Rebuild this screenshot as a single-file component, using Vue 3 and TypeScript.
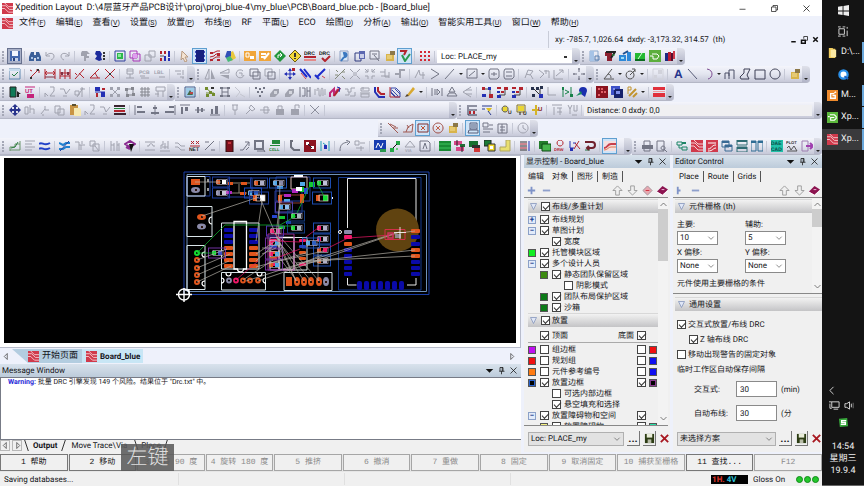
<script setup lang="ts">
import { h, ref } from 'vue'

type Shape = { kind: string; color: string; d: string; x?: number; y?: number; size?: number; text?: string }

const G = '#a0a2ae'
const D = '#727584'
const R = '#b3242e'
const B = '#2430b4'

// Each glyph is drawn on a 12 x 12 grid. s = stroke, S = heavy stroke, f = fill, t = lettering (x y size text).
const glyphSource: Record<string, string> = {
  save: 'f#4468ad M1 1h10v10H1z|f#f2f6ff M3 1h6v5H3z|f#c3d0e8 M3 8h6v3H3z|f#26407c M4 8h2v3H4z',
  find: 'f#3c6099 M2 2h3v3h2V2h3l2 5v4H7V8H5v3H0V7z|f#a8c4e8 M2 7h2v2H2z M8 7h2v2H8z',
  undo: `s${G} M2 2v4h4 M2 6c3-4 8-3 8 0c0 2-1 3-3 4`,
  redo: `s${G} M10 2v4H6 M10 6C7 2 2 3 2 6c0 2 1 3 3 4`,
  treeG: `f${G} M3 1h5l3 3H8v2h2v2H7v3H5V6H2V3z`,
  treeB: `f#1d2b9c M2 1h4l2 3-1 3 1 3-3 1-4-2 2-3-2-2z|f#333 M9 2h2v2H9z M9 5h2v2H9z M9 8h2v2H9z`,
  sqGreen: 's#30409c M1 1h10v10H1z|f#2cb84c M3 3h6v6H3z|f#8ce89c M4 4h3v3H4z',
  copyP: 's#a934b8 M1 1h7v7H1z M4 4h7v7H4z|f#e19cf0 M4 4h4v4H4z',
  copyG: `s${G} M1 5h6v6H1z M5 1h6v6H5z`,
  gridRB: `f${R} M1 1h2v3H1z M5 1h2v3H5z M1 8h2v3H1z|f${B} M9 1h2v6H9z M5 6h2v5H5z M9 8h2v3H9z|s#555 M1 6h4`,
  cursor: 'f#f4e3d2 M3 1l6 6H6l2 4-2 1-2-4-2 2z|s#b89a80 M3 1l6 6H6l2 4-2 1-2-4-2 2z',
  chip: 'f#16207e M2 0h8v12H2z|f#4452c4 M1 1h1v2H1z M1 5h1v2H1z M1 9h1v2H1z M10 1h1v2h-1z M10 5h1v2h-1z M10 9h1v2h-1z',
  netRed: `s${R} M1 3h3l4-2h3 M1 7l4-1 2-2h4 M1 11l6-4h4|f${R} M1 2h3v2H1z M8 3h3v3H8z M1 9h3v2H1z M8 9h3v2H8z`,
  layersY: 'f#e8c83c M5 3l4-2 3 7-5 3z|f#3250b8 M3 1h4v5l-3 3-3-2z|f#48b878 M2 8l4-2 3 4-5 2z',
  box1: 'f#f0a53a M0 1h12v10H0z|s#fff M2 3h3v4H2z|f#fff M6 6h4v3H6z',
  box2: 'f#f0a53a M0 1h12v10H0z|S#fff M2 4h5 M2 7h5 M5 9l5-6',
  diaG: 'f#22963c M6 0l6 6-6 6-6-6z|s#fff M4 8V5h3 M6 3l2 2-2 2',
  diaY: 'f#f2d838 M6 0l6 6-6 6-6-6z|s#6b5c10 M6 0l6 6-6 6-6-6z|f#333 M5 3h2v4H5z M5 8h2v1H5z',
  drc: `t#111 0 5 5 DRC|f${R} M0 6h12v2H0z|f#e38a8a M0 9h12v2H0z`,
  drcV: `t#111 0 5 5 DRC|S${R} M3 8l3 3 5-5`,
  mag: 's#8fa2c4 M1 1h8v10H1z|f#d6e8f8 M2 2h6v8H2z|S#3a78c0 M5 3a2 2 0 1 1 1 4z M5 7l-3 4',
  paste: 's#303c80 M1 3h6v8H1z|f#5c68b0 M5 1h6v8H5z|f#c9cee8 M6 4h4v4H6z',
  winG: `s${D} M1 1h9v8H1z|s${D} M5 5l5 6 M3 4h5`,
  hand: 'f#d8b44c M2 4h8v7H2z|f#8c7848 M6 1h5v4H6z|s#f4e09c M3 6h5 M3 8h5',
  check: `S${R} M1 1h6l-2 4|S#2b9850 M3 5l3 6 5-7`,
  dots9: 'f#d42832 M1 1h2v2H1z M5 1h2v2H5z M9 1h2v2H9z M1 5h2v2H1z M5 5h2v2H5z M9 5h2v2H9z M1 9h2v2H1z M5 9h2v2H5z M9 9h2v2H9z',
  docBlue: 's#8ba8cc M1 1h8v10H1z|f#a6c3e6 M1 1h4v10H1z|s#5a80b0 M6 6h4v4H6z',
  redPen: 'f#8c2030 M1 2h7v4H1z M3 6h5v5H3z|S#222 M2 2h9l-4 6|s#30a040 M8 5h3',
  cardBlue: 'f#2d88d8 M0 5h7v6H0z M8 2h4v9H8z|f#9adcf8 M2 7h3v2H2z|S#205090 M4 4l5-3',
  cardGreen: 'f#24b832 M1 3h10v7H1z|f#0c6c20 M1 9h10v2H1z|s#d8ffd8 M4 9l4-6',
  dGreen: 'f#5cae3c M0 0h12v12H0z|s#fff M3 4h5l2 2-2 3H4V6H1',
  books: 'f#1c2880 M1 3h3v8H1z|f#b81c30 M4 2h3v9H4z|f#541030 M7 3h2v8H7z|f#d03848 M9 1h2v8H9z',
  formOk: 's#5f88b0 M0 1h11v10H0z|f#c6dced M0 1h11v2H0z|s#268048 M3 6l2 2 4-4',
  angle1: `s${R} M1 10l7-7 M1 2l2 1 M7 2h3v3|f#333 M1 9h2v2H1z M8 1h2v2H8z`,
  dimH: `s${R} M1 1v10 M11 1v10 M1 5h10 M3 3L1 5l2 2 M9 3l2 2-2 2|s#803040 M1 9h10`,
  dimHH: `s${R} M1 1v10 M6 1v10 M11 1v10 M1 5h10 M1 8h10|f#803040 M2 4h2v3H2z M8 4h2v3H8z`,
  dimSlash: `s${R} M1 11l9-10 M5 5l5 5 M3 7l-2-2`,
  dimAng: `s${R} M10 1L1 10h10 M6 5l3 5`,
  dimX: `s${R} M1 11L11 1 M1 1l9 9|f#333 M5 5h2v2H5z`,
  stamp: `s${G} M3 1h6v5H3z M6 6v4 M2 10h8 M3 3h6`,
  labelG: `s${G} M1 8h5 M2 10h8|t${G} 0 6 5 PCB`,
  labelL: `s${G} M5 9h6|t${G} 0 6 5 LBL`,
  linesG: `s${G} M1 3h6 M3 6h4 M6 9h4 M9 2v5 M9 9v2`,
  mirH: `s${G} M5 1v10H1z|f${G} M7 1l4 10H7z`,
  mirV: `s${G} M10 1v4H1z|f${G} M1 7h9v4z`,
  rot: `s${G} M9 3a4 4 0 1 0 1 4 M5 5h3v3`,
  sq2: `s${D} M1 1h8v7H1z M4 4h7v7H4z`,
  sq2b: `s${G} M1 1h7v7H1z|s${D} M4 4h7v7H4z`,
  moveRB: `s${B} M6 1v10 M1 6h10|f${R} M8 0h3v3H8z|f${B} M4 3l2-3 2 3z M4 9l2 3 2-3z M3 4L0 6l3 2z M9 4l3 2-3 2z`,
  bluePar: 'S#1c2ccc M1 1l7 8 M5 1l7 9|s#d04050 M2 5l5 6',
  blueK: 'S#1c2ccc M1 7l4 4 M11 1L3 9|s#d04050 M8 8l3 2',
  crossG: 's#858b7a M1 11L11 1 M2 2l2 2 M8 8l3 3 M1 7h3 M8 4h3',
  starG: `s${G} M1 1l3 3 M11 1L8 4 M1 11l3-3 M11 11L8 8 M4 5h4 M4 7h4`,
  starG2: `s${G} M1 4h3V1 M8 1v3h3 M1 8h3v3 M8 11V8h3 M1 1l3 3 M11 1L8 4`,
  plusStep: `s${G} M1 4h5 M6 1v8h4 M2 8h8 M10 4v6`,
  tG: `S${G} M1 6h5V2h5 M6 6v4`,
  tri: `s${G} M1 10l4-8 1 5h5 M9 4v7`,
  arrowG: `s${D} M2 1l8 5-8 5`,
  slash: `s${D} M1 11L10 1`,
  boxSlash: `s${D} M1 1h10v9H1z M3 8l6-5`,
  roundP: `s${D} M2 1h8l1 2v6l-2 2H2l-1-2V3z M3 6h6 M6 4v4`,
  roundM: `s${D} M2 1h8l1 2v6l-2 2H2l-1-2V3z M3 4h6 M3 8h6`,
  loopG: `s${G} M2 10l3-8 5 1-3 4-4-1 M7 6l3 5`,
  loopG2: `s${G} M1 2l5 4-4 4 M6 3h5v7 M8 2v4`,
  boxArr: `s${G} M1 2v9h9 M3 8l7-6 M6 2h4v3`,
  compass: `s${D} M6 0v4 M6 8v4 M0 6h4 M8 6h4 M5 1h2 M5 11h2 M1 5v2 M11 5v2`,
  protractor: 's#555 M9 1L1 11h10 M5 6c2 0 3 2 3 4',
  circArr: 's#555 M5 3a4 4 0 1 0 .1 0 M5 7l5-5 M7 1h3v3',
  ghost: 's#d1d2db M1 1h10v10H1z|f#d1d2db M6 2h4v4H6z M2 7h3v3H2z',
  bigA: 't#26348c 2 10 12 A',
  backslash: 's#565b76 M1 1l9 10',
  arcP: 's#7a4a90 M5 1c7 1 6 9 1 10',
  poly: 's#4b4e66 M1 11V5h4v6 M5 8V2h5v9',
  polyl: 's#3c3f54 M2 11h8L8 7l3-6H5v4L1 9z',
  rect: 's#3c3f54 M1 2h10v9H1z',
  circ: 's#3c3f54 M6 1a5 5 0 1 0 .1 0',
  chipGreen: 'f#0f7a58 M1 1h6v10H1z|s#222 M1 1h6v10H1z|f#222 M8 5l4 3-2 0v3H8z',
  ut: 'f#c4247a M3 8h7v4H3z|t#c4247a 1 7 6 UT|s#c4247a M1 1h10 M4 8v3',
  shape1: `s${G} M1 11V7l3 3 M6 1h4v4L6 10h5`,
  shape2: `s${G} M1 3h4l2 5 4-5 M4 10h4`,
  shape3: `s${G} M1 5h4v4H1z M6 3h5 M8 1v10 M3 11l6-9`,
  blkRB: `f${B} M1 1h5v4H1z M7 6h4v5H7z|f${R} M8 2h3v2H8z M2 7h2v4H2z|s${B} M1 6h10`,
  netG: `s${G} M2 2l8 8 M10 2L2 10|f${G} M1 1h3v3H1z M8 1h3v3H8z M1 8h3v3H1z M8 8h3v3H8z`,
  netG2: 's#85878f M3 3h6v6H3z|f#85878f M1 2h3v3H1z M7 1h3v3H7z M2 8h3v3H2z M8 7h3v3H8z',
  hash: 's#85878f M1 3h10 M1 6h10 M1 9h10 M3 1v10 M9 1v10 M6 1v10',
  flagG: `s${G} M2 1h9v4H2z M4 5v6 M9 5v6 M1 8h4`,
  photo: 's#3c5c8c M1 1h10v10H1z|f#9ccbe8 M2 2h8v8H2z|f#486848 M3 9l3-5 3 5z|f#b84848 M6 6h3v2H6z',
  greenNet: 's#6f8a30 M2 2l8 7 M2 7h8|f#728c2c M1 1h3v3H1z M5 5h3v3H5z M2 8h3v3H2z M8 7h3v3H8z|f#333 M7 1h3v2H7z',
  brack: `s${D} M3 2h6v8H3z M3 6h6|f${D} M1 1h3v2H1z M8 1h3v2H8z M1 9h3v2H1z M8 9h3v2H8z`,
  fadeN: 's#c4c6d0 M1 1l5 5-4 5 M6 8l5 3',
  dotsD: `f${D} M1 1h2v2H1z M5 2h2v2H5z M9 1h2v2H9z M3 5h2v2H3z M7 5h2v2H7z M5 9h2v2H5z`,
  waveG: `f${G} M1 8l4-5h5v4L6 11H1z|f#d4d6de M5 5h3v3H5z`,
  hh: `s${D} M1 1v10 M3 2h3v8H3 M8 1v10 M8 5h3 M11 1v10`,
  mm: `s${G} M1 3v6 M3 5c0-4 2-4 2 0v3c0 3 2 3 2 0V5c0-4 2-4 2 0v5 M11 3v6`,
  diagRP: `S#c02878 M1 11V7l4-4v5l4-5|S${R} M5 10l6-8|s${B} M8 1l3 1-1 4`,
  meander: `s${G} M1 3h3v3h3V2h4 M1 9h4V6 M6 10h5V6`,
  crates: `s${G} M2 2h8v3H2z M1 7h10 M2 8h8v3H2z M4 1v3`,
  curveBR: `S${B} M1 1v5l4 5h6|S${R} M4 1v4l3 3h4`,
  hatchBlue: `s#3a4aaa M2 2h5l4 4v5H6L2 7z M3 4l6 6 M2 6l4 4 M6 3l5 5|s${R} M1 1v10h10`,
  pencil: 'f#d8a830 M3 9L9 1l2 2-6 7z|f#50402c M1 11l2-3 2 2z',
  playG: `s${D} M1 2v8 M4 3v6 M6 3l3 3-3 3z M11 2v8`,
  coneG: `s${D} M6 1l3 5H3z M1 10h10L9 7H3z`,
  spread: `s${G} M10 1L2 6l8 5 M11 4H5 M11 8H5`,
  nodeRB: `s#444 M3 3h6v6|f${R} M1 1h3v3H1z M8 8h4v4H8z|f${B} M7 1h3v3H7z M1 8h4v3H1z`,
  nodeRB2: `s#444 M3 9h6V3|f${R} M1 1h4v2H1z M8 1h4v3H8z M5 5h3v2H5z|f${B} M1 5h3v2H1z M1 9h4v3H1z`,
  pins: `s#333 M3 3l6 6 M9 3v6|f#26304c M0 1h3v3H0z M5 1h3v3H5z M9 0h3v3H9z M1 8h3v3H1z|f${B} M8 8h4v4H8z`,
  elbow: `s${G} M2 1v8h8`,
  elbowD: 'S#6c6f7c M2 1v6l3 3h6|f#6c6f7c M1 0h3v2H1z',
  greenH: 's#178048 M2 1v10 M10 1v10 M4 4l4 2-4 2|f#178048 M1 1h2v3H1z M9 8h3v3H9z',
  blueBall: 'f#1b2fae M3 5a4 4 0 0 1 8 0l-2 6-4-3z|f#1d8c60 M0 10l5-5 1 3z',
  redGrid: 'f#8b1320 M0 0h12v12H0z|f#e06068 M2 2h2v2H2z M5 2h2v2H5z M8 5h2v2H8z M2 8h2v2H2z M5 5h2v2H5z',
  blueStack: 'f#3c50c8 M0 0h9v9H0z|f#16226c M3 3h9v9H3z|f#7f90ec M2 2h2v2H2z M5 5h4v3H5z',
  pencilY: 's#c29430 M2 1v7 M2 1h3v3H2|S#c29430 M3 10l7-7 M7 11l4-4',
  redBars: 'f#e0303c M0 1h13v3H0z M0 7h13v4H0z|f#f09ca0 M0 5h13v1H0z',
  moveB: 'S#29348c M6 1v10 M1 6h10|f#29348c M3 3l3-3 3 3z M3 9l3 3 3-3z M3 3L0 6l3 3z M9 3l3 3-3 3z',
  upd: `s${G} M1 3v7h3V3z M6 1v8 M6 5h4v5`,
  wrench: `s${G} M2 10l4-5 M6 2v4h4 M3 11h2`,
  sheets: `s${G} M1 2h5v7H1z M4 5h6v6H4z`,
  clip: 'f#c89444 M1 1h8v10H1z|f#f6e9b0 M5 4h6l1 2v6H5z|f#5a5030 M3 0h4v2H3z',
  stackR: `f#3a2430 M0 1h11v2H0z|f#26803c M0 4h11v1H0z|f${R} M0 6h11v2H0z|f#3a2430 M0 9h12v2H0z`,
  alL: `s${D} M1 1v10|f${D} M3 2h5v2H3z M3 7h8v2H3z`,
  alC: `s${D} M6 1v10|f${D} M4 3h4v2H4z M2 8h8v2H2z`,
  alR: `s${D} M11 1v10|f${D} M5 2h5v2H5z M1 7h9v2H1z`,
  alT: `s${D} M1 1h10|f${D} M2 3h2v7H2z M6 3h3v4H6z`,
  alM: `s${D} M1 6h10|f${D} M3 3h2v6H3z M7 4h2v4H7z`,
  alB: `s${D} M1 11h10|f${D} M2 5h2v5H2z M6 2h3v8H6z`,
  pinG: `s${G} M3 1h6 M4 1v5h4V1 M6 6v5`,
  pinL: `s${G} M1 6h10 M5 3v6h4V3z`,
  keyG: `s${G} M2 10l5-5 M7 1l4 4-3 2-3-3z`,
  lock: `f${G} M2 5h8v6H2z|s${G} M4 5V2h4v3`,
  unlock: `f${G} M2 5h8v6H2z|s${G} M6 5V1h4v3`,
  xG: 's#8c8f9c M1 1l9 9 M10 2L2 10',
  ruler: `s#30344c M2 1v10 M3 2h8 M3 6h8|f${R} M3 7h2v3H3z M7 7h2v3H7z|s#30344c M2 11h9`,
  yPin: 'f#e0c020 M5 4h6l-3 4z|s#28388c M1 2h10 M7 7l3 4 M1 5h3',
  yU: 's#54501c M4 2a3 3 0 1 0 .1 0|f#ead634 M2 3h4v4H2z|t#222 7 10 5 U',
  yBox: 's#84741c M1 1h8v7H1z|f#ead634 M2 2h6v5H2z|t#222 7 11 5 U|s#222 M4 8v3',
  yH: 'f#d4b428 M4 1h2v10H4z M1 5h7v2H1z|t#84212c 7 7 6 U',
  jut: `s${G} M1 1h10 M3 3v8 M6 4h5 M6 8h5 M9 4v7`,
  yju: `s${G} M2 1l2 4 2-4 M4 5v5 M8 1v6h3V1 M6 11h5`,
  dRed: 's#a05850 M1 1l10 10 M3 2l6 3 M6 6h5',
  dRed2: 's#a05850 M1 10h9l1-8-5 3-2 5 M5 3l2 3',
  rectX: 's#803030 M1 2h10v8H1z|s#c05030 M4 4l4 4 M8 4L4 8',
  circX: 's#a04a40 M6 1a5 5 0 1 0 .1 0|s#c06048 M4 4l4 4 M8 4L4 8',
  stampD: 's#595d78 M3 1h7v6H3z M4 3h5 M4 5h5 M2 8h9v3H1z',
  tabG: `s${D} M1 1h5v4H1z M7 3h4 M1 7h10 M1 10h7`,
  formG: `s${D} M1 2h9v9H1z M3 5h5 M3 8h5 M5 2v9`,
  clock: `s${G} M6 1a5 5 0 1 0 .1 0 M6 3v3l3 2`,
  greenLay: 's#6a946c M1 11V7h5V4h5V1 M1 10h10V4|s#2c8040 M2 8l4-1 3-5',
  textG: `s${G} M1 1h10 M1 4h7 M1 7h10 M1 10h7`,
  waveB: 'S#2040c8 M0 4c3-3 5 3 11-1 M0 9c3-3 5 3 11-1',
  waveCut: 'S#2080d0 M0 3l4 2 3-2h4 M0 9l4 0 3-2h4|s#1c40a0 M1 11L10 1',
  fork: `s${G} M1 2h4v8 M5 5h6 M7 5v5 M8 1v3`,
  gBoxes: `s${G} M1 1h5v5H1z M4 4h6v7H4z M6 6l4 5`,
  towers: `s${G} M2 1v10 M5 3v8 M2 5h3 M8 1v10 M10 3v8 M8 5h2`,
  purpCur: 'S#8a2a90 M1 4l5-3 5 3-5 3z M2 7l4 2|f#111 M5 4h5L7 12z',
  gapG: `s${G} M1 2h10 M1 10h10 M3 6h2c0-3 4-3 4 0h2`,
  comb: `s${G} M1 11h10 M2 9V5h2V1 M6 9V3 M9 9V1 M3 7h6`,
  waveG2: `s${G} M1 3h3l3 3h4 M1 7h3l3 3h4`,
  net: `s${R} M2 1l3 3 M5 1L2 4 M7 1l3 3 M10 1L7 4 M1 6h10|t#222 0 11 5 NET`,
  percent: `s${D} M1 10L10 1 M1 2h4 M7 10h4`,
  chipRed: 'f#7c101c M2 0h7v12H2z|f#c4343c M4 2h3v2H4z|s#301010 M2 0h7v12H2z',
  arrNE: `s${D} M1 10h3l6-8 M6 2h4v4 M7 10l3-3`,
  boxCorner: `S${D} M1 1h8v8H1z|s${D} M9 9l2 3 M3 11h8`,
  cell: 'f#22883a M3 0h8v4H3z|t#178030 0 11 4 CELL|f#22883a M1 5h10v1H1z',
  redPCB: 'f#8b1320 M0 0h12v12H0z|f#fff M2 2h3v3H2z M7 6h3v3H7z|s#181830 M4 4l4 4',
  cyanH: `s#20a0b8 M2 1v10 M10 1v10 M4 3l4 3|f${B} M5 5h3v4H5z`,
  arcG: `s${D} M1 11c0-7 3-8 8-9 M7 0l4 2-3 3`,
  lettG: `s${G} M1 1h4v4H1z M6 3h5 M2 8h8 M7 6v5`,
  blueN: 'f#173cb0 M0 0h12v10H0z|s#fff M2 8l2-5 3 5 2-5|f#2b9850 M6 9h6v3H6z',
  greenDots: 'f#24a848 M1 8h4v4H1z M7 1h4v4H7z|s#111 M4 8l4-4|f#65d47c M7 8h2v2H7z',
  triVia: `s${G} M6 1l5 6H1z|t${G} 1 12 4 VIA`,
  docA: `s${D} M1 1h8l2 2v8H1z M4 9l2-6 2 6`,
  greenBlk: 'f#1a8a34 M0 1h12v10H0z|s#3cc45c M0 4h12 M0 8h12',
  magGr: 'f#d84888 M0 1h8v4H0z M2 7h8v4H2z|f#246c38 M6 4h5v3H6z|s#222 M3 0v6 M8 6v6',
  grRed: 'f#187030 M0 1h9v6H0z|f#303030 M3 5h8v3H3z|f#d03838 M5 8h6v4H5z',
  yelGr: 'f#1a7a34 M0 0h7v6H0z|s#222 M0 0h7v6H0z|f#f0d82c M4 4h7v7H4z|s#333 M4 4h7v7H4z|f#fff M6 6h3v3H6z',
  yelL: 'f#e9df70 M7 0h4v11H1V7h6z|s#b2a860 M7 0h4v11H1V7h6z',
  bars: `s#333 M1 2h7 M1 6h7 M1 10h7|s${R} M1 4h7 M1 8h7|s${B} M10 1v10`,
  greenSt: 'f#237d2c M0 1h9v8H0z|f#46b44c M3 4h9v7H3z|s#0d4814 M3 4h9v7H3z',
  redDrw: `s${R} M6 0a3 3 0 1 0 .1 0|t${R} 0 11 4 DRW`,
  scis: `s${B} M1 1v7h4 M4 3h3|s${R} M5 9l5-8 M6 3l5 6|f${B} M1 8h3v3H1z`,
  uRed: 'S#70202c M1 2h7c4 0 4 6 0 6H3|s#1f7040 M1 10h5|S#70202c M5 6L3 8l2 2',
  redWave: 'f#f5dfdf M0 1h12v10H0z|S#c8404c M0 8c4 0 3-4 7-4h5|s#e07a50 M0 10c4 0 4-3 7-3h5',
  print: `f${D} M1 5h11v4H1z|s${D} M3 5V1h6v4 M3 9v2h6V9`,
  preview: `s${D} M1 1h7v10H1z M7 6a2 2 0 1 0 .1 0 M8 9l3 3`,
  plug: 's#1d8466 M1 2h5v3H1z M6 7h5v3H6z M3 5v3h3|f#1d8466 M6 2h4v2H6z',
  redLogo: 'f#d03a4c M0 0h12v12H0z|s#f6ccd0 M0 3h4l4 4h4 M0 6h3l4 4h5 M3 0l4 4h5',
  redLogo2: 'f#d03a4c M0 0h12v12H0z|s#fff M2 3h8 M2 9c4 0 3-4 8-4 M2 11c5 0 5-3 8-3',
  casc: 's#3a6a94 M1 1h7v6H1z M4 5h7v6H4z|f#3a6a94 M1 1h7v2H1z M4 5h7v2H4z',
  tileH: 's#2f6c74 M1 0h10v5H1z M1 7h10v5H1z|f#2f6c74 M1 0h10v2H1z M1 7h10v2H1z',
  tileV: 's#2f6c94 M0 1h5v10H0z M7 1h5v10H7z|f#2f6c94 M0 1h5v2H0z M7 1h5v2H7z',
  dae: 'f#22c0a8 M0 0h12v12H0z|t#0b4a48 0 5 5 DAE|t#0b4a48 0 11 5 CAD',
  plot: 't#333 0 4 4 PLOT|s#555 M1 8l2-2 2 4 3-4 3 5 M1 11h10',
  exitP: 's#9d7fb0 M1 1h6v10H1z|S#a040b0 M5 6h6 M9 3l3 3-3 3',
  armUp: 's#9a9a9a M6 1l5 5H8v5H4V6H1z',
  armDown: 's#9a9a9a M6 11l5-5H8V1H4v5H1z',
  erase: 'f#e8a8b0 M1 6l5-5 5 5-5 5z|s#a09098 M1 6l5-5 5 5-5 5z|s#d02838 M4 6h4',
  book: 'f#8c1450 M0 7l6-6 6 4-6 6z|s#fff M0 8l6 3 6-5|s#f8c0e0 M5 5h3',
  plus: 'S#7f93c8 M6 2v8 M2 6h8',
  half: 'S#7f93c8 M3 2v8 M3 6h3',
  minus: 'S#8fa0cc M2 6h8',
  disk: 'f#2c3c14 M1 1h10v10H1z|f#e8ecd8 M3 1h6v4H3z|f#b8bca8 M4 7h4v4H4z',
  del: 'S#a81820 M2 2l8 8 M10 2l-8 8',
  down: 's#555 M2 4l4 4 4-4',
  up: 's#555 M2 8l4-4 4 4',
  left: 's#444 M7 2L3 6l4 4z',
  right: 's#444 M5 2l4 4-4 4z',
  menu: 'f#111 M1 4h10L6 9z',
  pin: 's#111 M3 7h7 M4 7V2h4v5 M7 7V2 M6 7v4',
  close: 's#111 M2 2l8 8 M10 2l-8 8',
  minWin: 's#222 M2 7h8',
  restore: 's#222 M2 4h6v6H2z M4 4V2h6v6H8',
  minDoc: 'S#111 M3 9h6',
  restoreDoc: 'S#111 M2 7h5v4H2z|s#111 M5 5V2h5v5H8',
  closeDoc: 'S#111 M3 3l6 6 M9 3L3 9',
  twist: 'f#dfe6f6 M2 2h8L6 10z|s#7f90b8 M2 2h8L6 10z',
  slantR: 's#222 M4 0l4 12',
  slantL: 's#222 M8 0L4 12'
}

function parseGlyph(src: string): Shape[] {
  return src.split('|').map((s) => {
    const gap = s.indexOf(' ')
    const kind = s[0]
    const color = s.slice(1, gap)
    const d = s.slice(gap + 1)
    if (kind !== 't') return { kind, color, d }
    const [x, y, size, text] = d.split(' ')
    return { kind, color, d: '', x: +x, y: +y, size: +size, text }
  })
}

const glyphs: Record<string, Shape[]> = {}
for (const k of Object.keys(glyphSource)) glyphs[k] = parseGlyph(glyphSource[k])

const Glyph = (props: { name: string }) =>
  h(
    'svg',
    { viewBox: '0 0 12 12', 'aria-hidden': 'true' },
    (glyphs[props.name] ?? []).map((s) =>
      s.kind === 't'
        ? h('text', { x: s.x, y: s.y, 'font-size': s.size, fill: s.color }, s.text)
        : h('path', {
            d: s.d,
            fill: s.kind === 'f' ? s.color : 'none',
            stroke: s.kind === 'f' ? 'none' : s.color,
            'stroke-width': s.kind === 'S' ? 2 : 1
          })
    )
  )
Glyph.props = ['name']

// Tokens: "/" separator, "v" drop arrow, "*name" pressed button, "@name" special part.
const toolRows: string[][] = [
  [
    '*save / find undo redo / treeG treeB / sqGreen copyP copyG gridRB / cursor *chip netRed layersY / box1 box2 diaG diaY drc drcV / mag paste winG hand *check / dots9 / @scheme',
    'docBlue redPen cardBlue cardGreen dGreen books'
  ],
  [
    'formOk / angle1 dimH dimHH dimSlash dimAng dimX / stamp labelG labelL / linesG',
    'mirH mirV rot sq2 sq2b / moveRB bluePar blueK / crossG starG starG2 plusStep tG / tri arrowG slash v boxSlash v roundP roundM / loopG loopG2 boxArr / compass',
    'protractor v circArr v / ghost / bigA backslash arcP v poly polyl rect circ / hand'
  ],
  [
    'chipGreen ut / shape1 shape2 shape3 / blkRB netG netG2 hash flagG',
    'photo / greenNet brack fadeN / dotsD waveG waveG hh mm diagRP meander crates curveBR hatchBlue pencil v / playG coneG spread / nodeRB nodeRB2 nodeRB2 / pins elbow greenH blueBall / redGrid blueStack pencilY v / redBars'
  ],
  [
    'moveB upd wrench sheets clip shape1 shape2 stackR / alL alC alR alT alM alB / pinG keyG pinL lock unlock / xG / @space',
    'ruler yPin / yU yBox yH / jut yju / @distance'
  ],
  ['dRed dRed2 *rectX circX hand / *stampD tabG formG / clock'],
  [
    'greenLay textG waveB / waveCut fork gBoxes / towers purpCur / gapG comb waveG2 net percent / chipRed arrNE boxCorner cell / elbowD redPCB cyanH / arcG lettG / blueN greenDots triVia docA / greenBlk magGr grRed yelGr yelL / bars / greenSt redDrw scis uRed / *redWave @pad',
    'print preview / plug redLogo redLogo2 casc tileH tileV / dae plot exitP'
  ]
]

const menus: [string, string][] = [
  ['文件', 'F'], ['编辑', 'E'], ['查看', 'V'], ['设置', 'S'], ['放置', 'P'], ['布线', 'R'], ['RF', ''],
  ['平面', 'L'], ['ECO', ''], ['绘图', 'D'], ['分析', 'A'], ['输出', 'O'], ['智能实用工具', 'U'], ['窗口', 'W'], ['帮助', 'H']
]

type TreeRow = { t: string; lv: number; on: boolean; box?: string; sw?: string; core?: boolean; sw2?: string; on2?: boolean; right?: string; line?: boolean }
const sections = ref<{ title: string; on: boolean; rows: TreeRow[] }[]>([
  {
    title: '布线/多重计划',
    on: true,
    rows: [
      { t: '布线规划', lv: 0, on: true, box: '+' },
      { t: '草图计划', lv: 0, on: true, box: '−' },
      { t: '宽度', lv: 1, on: true },
      { t: '托管模块区域', lv: 0, on: true, sw: '#11ee22' },
      { t: '多个设计人员', lv: 0, on: true, box: '−' },
      { t: '静态团队保留区域', lv: 1, on: true, sw: '#3c8a10' },
      { t: '阴影模式', lv: 2, on: false },
      { t: '团队布局保护区域', lv: 1, on: true, sw: '#0c7a18' },
      { t: '沙箱', lv: 1, on: true, sw: '#0c7a18' }
    ]
  },
  {
    title: '放置',
    on: true,
    rows: [
      { t: '顶面', lv: 0, on: true, on2: true, right: '底面', line: true },
      { t: '组边框', lv: 0, on: false, sw: '#c010f0', sw2: '#f01010', on2: false },
      { t: '规划组', lv: 0, on: false, sw: '#f01010', sw2: '#1010f0', on2: false },
      { t: '元件参考编号', lv: 0, on: false, sw: '#ff7a10', sw2: '#1010f0', on2: false },
      { t: '放置边框', lv: 0, on: true, sw: '#2a64d0', sw2: '#8c3c90', core: true, on2: true },
      { t: '可选内部边框', lv: 1, on: false },
      { t: '悬空填充和选择', lv: 1, on: true },
      { t: '放置障碍物和空间', lv: 0, on: true, box: '−', on2: true },
      { t: '放置障碍物', lv: 1, on: false, sw: '#f4f080', sw2: '#28e0a8', on2: false }
    ]
  }
])

const fkeys: [string, boolean][] = [
  ['1 帮助', true], ['2 移动', true], ['3 旋转 90 度', false], ['4 旋转 180 度', false], ['5 推挤', false], ['6 撤消', false],
  ['7 重做', false], ['8 固定', false], ['9 取消固定', false], ['10 捕获至栅格', false], ['11 查找...', true], ['F12', false]
]

const gridFields = ref([
  { label: '主要:', value: '10' },
  { label: '辅助:', value: '5' },
  { label: 'X 偏移:', value: 'None' },
  { label: 'Y 偏移:', value: 'None' }
])
const options = ref([
  { label: '交互式放置/布线 DRC', on: true, nested: false },
  { label: 'Z 轴布线 DRC', on: true, nested: true },
  { label: '移动出现警告的固定对象', on: false, nested: false }
])
const saveEvery = ref([
  { label: '交互式:', value: '30', unit: '(min)' },
  { label: '自动布线:', value: '30', unit: '(分' }
])
const headButtons = ['menu', 'pin', 'close']

// Board artwork
const O = '#e0551c'
const GY = '#8a8aa8'
const PK = '#f01868'
const GN = '#14dc32'
const BL = '#0a0aa8'
const CY = '#50a8e8'
type Part = [number, number, string, string, string]
const parts: Part[] = [
  [221, 181, O, '#fff', '#1c3c9c'], [221, 192, '#8a8aa8', '#c8c8d8', '#1c3c9c'], [259, 182, O, '#b0b0c8', '#1c3c9c'],
  [253, 192, CY, '#2860c8', '#1848c0'], [278, 182, CY, GY, '#2050b0'], [322, 182, GN, '#c0c0d8', '#1c4cb0'],
  [284, 206, CY, '#90c0f0', '#5040b0'], [296, 215, GN, '#a8b8c0', '#143c80'], [296, 227, GN, '#a8b8c0', '#143c80'],
  [322, 227, PK, '#b0b0c8', '#1c4cb0'], [322, 238, PK, '#b8b8d0', '#1c4cb0'], [322, 249, O, PK, '#1c4cb0'],
  [322, 260, O, '#b0b0c8', '#1c4cb0'], [217, 252, GN, '#4050c8', '#7030a0'], [311, 242, CY, '#3060c0', '#2050b0'],
  [275, 230, PK, '#d03cb0', '#5030b0'], [274, 242, PK, CY, '#7030a0'], [274, 253, PK, CY, '#7030a0'], [274, 264, O, CY, '#7030a0']
]
const bigParts: Part[] = [[259, 197, O, '#fff', '#1c3c9c'], [322, 197, O, GN, '#1c4cb0']]
const icPads = [229, 235, 241, 247, 253, 259, 265].map((y, i) => ({ y, c: i < 3 ? BL : O }))
const ic2Pads = [240, 246, 252, 258, 264].map((y, i) => ({ y, c: [PK, '#2040c0', O, O, PK][i] }))
const modL = [231, 236, 243, 249, 255, 261, 267, 273].map((y, i) => ({ y, c: [GY, PK, O][i] ?? BL }))
const modR = [230, 236, 243, 249, 255, 261, 267, 273].map((y, i) => ({ y, c: [0, 3, 4].includes(i) ? O : BL }))
const ratsGrey =
  'M195 181h26 M202 215l57-19 M197 259l30-11 M197 267l33-14 M197 274l32-14 M197 281l34-16 M260 197l36 83 M262 200l-6 40 M279 245l17 35 M276 252l20 27 M282 238l37 42 M278 240l33 40 M276 236l28 44 M246 280l153-49 M258 280l142-49 M399 232l16-2 M296 262l119-13 M306 260l109-5 M306 262l25-3 M318 250v30 M256 253l18-12 M256 260l20-18 M256 266l50-14 M270 262l54-12 M243 279l30-20 M280 200l-4 34 M280 182l-2 64 M262 247h10 M262 253l14-6 M288 268l34-14'
</script>

<template>
  <div class="desktop">
    <div class="app">
      <header class="titlebar">
        <Glyph class="logo" name="redLogo" />
        <span class="title">Xpedition Layout&nbsp; D:\4层蓝牙产品PCB设计\proj\proj_blue-4\my_blue\PCB\Board_blue.pcb - [Board_blue]</span>
        <div class="winbtns">
          <button aria-label="Minimize"><Glyph name="minWin" /></button>
          <button aria-label="Restore"><Glyph name="restore" /></button>
          <button aria-label="Close"><Glyph name="close" /></button>
        </div>
      </header>

      <nav class="menubar">
        <Glyph class="logo" name="redLogo" />
        <button v-for="m in menus" :key="m[0]">{{ m[0] }}<small v-if="m[1]">(<u>{{ m[1] }}</u>)</small></button>
      </nav>

      <div class="coords">
        <output>xy: -785.7, 1,026.64&nbsp; dxdy: -3,173.32, 314.57&nbsp; (th)</output>
        <div class="mdi">
          <button aria-label="Minimize board"><Glyph name="minDoc" /></button>
          <button aria-label="Restore board"><Glyph name="restoreDoc" /></button>
          <button aria-label="Close board"><Glyph name="closeDoc" /></button>
        </div>
      </div>

      <div class="toolbars">
        <div v-for="(row, r) in toolRows" :key="r" class="toolrow" :class="{ floating: r === 4 }">
          <div v-for="(g, k) in row" :key="k" class="toolgroup" :class="{ grow: g.includes('@distance') }">
            <i class="grip"></i>
            <template v-for="(t, n) in g.split(' ')" :key="n">
              <i v-if="t === '/'" class="sep"></i>
              <button v-else-if="t === 'v'" class="drop" aria-label="More"></button>
              <select v-else-if="t === '@scheme'" class="scheme" aria-label="Display scheme"><option>Loc: PLACE_my</option></select>
              <output v-else-if="t === '@distance'" class="distance">Distance: 0 dxdy: 0,0</output>
              <i v-else-if="t === '@space'" class="space"></i>
              <i v-else-if="t === '@pad'" class="padder"></i>
              <button v-else class="tool" :class="{ on: t[0] === '*', deep: t === '*save' }" :aria-label="t.replace('*', '')">
                <Glyph :name="t.replace('*', '')" />
              </button>
            </template>
            <button class="over" aria-label="Toolbar options"></button>
          </div>
        </div>
      </div>

      <main class="work">
        <section class="center">
          <div class="canvas">
            <svg class="pcb" viewBox="4 157 512 185" preserveAspectRatio="xMinYMin meet">
              <g fill="none">
                <path d="M184 171h245v122.500H184z" stroke="#1a3fa8" />
                <path d="M187 173.500h239.500v117H187z" stroke="#6f90b8" />
                <path d="M338.500 176.500h82.500v112.500h-82.500z" stroke="#14388c" />
                <path d="M187 175.500h23v19.500h-23z" stroke="#1c3c9c" />
                <path d="M187 175.500h18v19.500h-18z M187 205.500h25v30h-25z M187 244.500h18v44h-18z M221.500 271.500h44v17.500h-44z M284 271.500h48v18h-48z M221.500 222h37.500v46h-37.500z M270 236.500h37v32.500h-37z" stroke="#d8e4e8" />
                <path d="M234 220.500h12.500v47.500h-3a3 3 0 0 1-6 0H234z M279 236.500h15v32h-15z" stroke="#fff" stroke-width="1.300" />
                <path d="M347.500 227v-49.500H416v52 M347.500 277v7h9 M416 277v7h-9" stroke="#e8e8e8" />
                <path d="M208 178v3 M208 187v3 M212 216c-4 0-4 7 0 7 M205 251c-4 0-4 5 0 5 M205 280c-4 0-4 5 0 5 M226 272c0 4 5 4 5 0 M257 272c0 4 5 4 5 0 M221 277c4 0 4 5 0 5 M266 277c-4 0-4 5 0 5" stroke="#fff" stroke-width="1.200" />
              </g>
              <circle cx="397.500" cy="229" r="21.500" fill="#604310" />
              <g>
                <template v-for="p in icPads" :key="p.y">
                  <rect x="224" :y="p.y - 2" width="9" height="4" rx="1" :fill="p.c" />
                  <rect x="249" :y="p.y - 2" width="9" height="4" rx="1" :fill="p.c" />
                </template>
                <template v-for="p in ic2Pads" :key="p.y">
                  <rect x="270" :y="p.y - 2" width="7" height="3" rx="1" :fill="p.c" />
                  <rect x="299" :y="p.y - 2" width="7" height="3" rx="1" :fill="p.c" />
                </template>
                <rect v-for="p in modL" :key="p.y" x="344" :y="p.y - 2" width="8" height="4" rx="1" :fill="p.c" />
                <rect v-for="p in modR" :key="p.y" x="411" :y="p.y - 2" width="9" height="4" rx="1" :fill="p.c" />
                <rect v-for="n in 7" :key="n" :x="350 + n * 7" y="280" width="5" height="9" rx="2" :fill="BL" />
                <circle cx="340" cy="231" r="1.500" fill="none" stroke="#fff" />
              </g>
              <g fill="none">
                <path d="M239 183v9 M231 182h19 M231 192h16" stroke="#8c8474" />
                <path d="M280 194h22v8h-22z" stroke="#8e3c30" />
                <path d="M276 176h34v24h-34z M275 190h27v22h-27z M228 177h24v19h-24z" stroke="#243c98" />
                <path d="M291 176h16v12h-16z" stroke="#d8b8b0" />
                <path d="M268 233h26v36h-26z" stroke="#a02890" />
              </g>
              <g>
                <path fill="#e0551c" d="M191 178h9v6h-9z M228 181h5v3h-5z M241 181h6v3h-6z M240 191h6v3h-6z M278 194h4v8h-4z M300 193h4v9h-4z" />
                <path fill="#14c832" d="M279 215h6v3h-6z M279 225h6v3h-6z M309 181h6v5h-6z M300 186h4v5h-4z" />
                <path fill="#b028c0" d="M226 190h6v3h-6z M284 193h7v3h-7z M292 188h6v4h-6z" />
                <path fill="#50a8e8" d="M277 185h6v3h-6z M300 181h5v4h-5z M284 198h6v3h-6z" />
                <path fill="#fff" d="M296 186h6v4h-6z M294 174h9v2h-9z M331 196h2v2h-2z" />
                <path fill="#2848d0" d="M272 214h5v3h-5z M286 220h5v3h-5z M304 187h4v6h-4z" />
                <ellipse cx="195.500" cy="189" rx="4.500" ry="3" :fill="GY" />
                <ellipse cx="201.500" cy="216" rx="4.500" ry="3" :fill="O" />
                <ellipse cx="201.500" cy="225.500" rx="4.500" ry="3" :fill="GY" />
                <circle v-for="(y, i) in [252, 259, 267, 274, 281]" :key="y" cx="197" :cy="y" r="2" fill="none" :stroke="i ? O : GN" stroke-width="2" />
                <circle v-for="(x, i) in [229, 236, 243, 250, 258]" :key="x" :cx="x" cy="279.500" r="2" fill="none" :stroke="[GY, PK, O, O, O][i]" stroke-width="1.800" />
                <rect x="286" y="276" width="6" height="9" :fill="O" />
                <ellipse v-for="(x, i) in [297, 304, 311, 319, 326]" :key="x" :cx="x" cy="280.500" rx="3" ry="4.500" :fill="i === 4 ? GY : O" />
                <path d="M195 188h2v2h-2z M296 280h2v2h-2z M303 280h2v2h-2z M310 280h2v2h-2z M318 280h2v2h-2z M325 280h2v2h-2z M201 215h2v2h-2z M201 225h2v2h-2z" fill="#301810" />
              </g>
              <g v-for="(p, i) in parts" :key="'p' + i">
                <rect :x="p[0] - 8.500" :y="p[1] - 5" width="17" height="10" fill="none" :stroke="p[4]" />
                <rect :x="p[0] - 5" :y="p[1] - 2" width="4" height="4" :fill="p[2]" />
                <rect :x="p[0] + 1" :y="p[1] - 2" width="4" height="4" :fill="p[3]" />
                <rect :x="p[0] - 4" :y="p[1] - 2.500" width="10" height="5" fill="none" stroke="#c8c0d0" stroke-width=".6" />
              </g>
              <g v-for="(p, i) in bigParts" :key="'b' + i">
                <rect :x="p[0] - 9.500" :y="p[1] - 6" width="19" height="12" fill="none" :stroke="p[4]" />
                <rect :x="p[0] - 6" :y="p[1] - 3" width="4" height="6" :fill="p[2]" />
                <rect :x="p[0] + 1" :y="p[1] - 3" width="5" height="6" :fill="p[3]" />
                <rect :x="p[0] - 3" :y="p[1] - 3" width="9" height="6" fill="none" stroke="#d8c8c0" stroke-width=".7" />
              </g>
              <g fill="none" stroke-width=".7">
                <path :d="ratsGrey" stroke="#b4b0a8" />
                <path d="M197 252l28-28h55l16-9 M197 252h18 M280 225h15 M311 182l-14 30 M317 182l7 13" stroke="#10c030" />
                <path d="M348 237l44-3 M322 250l26-13 M236 279l22-19 M276 240l24 1 M274 232l8 8 M306 236l12-9 M274 258l26-10" stroke="#f01868" />
              </g>
              <path d="M385 228.500h20v10h-20z" fill="none" stroke="#d03048" />
              <path d="M388 232h5v5h-5z" fill="none" stroke="#d03060" stroke-width="1.500" />
              <path d="M395 233h6v4h-6z" fill="#908890" />
              <path d="M400 226v12 M394 231.500h12" stroke="#fff" stroke-width=".8" />
              <g fill="none" stroke="#fff" stroke-width="1.400">
                <circle cx="184" cy="293.500" r="5.500" />
                <path d="M176 293.500h16 M184 287v14 M185 289h4v4" />
              </g>
            </svg>
          </div>

          <div class="doctabs">
            <button class="arrow" aria-label="Previous tab"><Glyph name="left" /></button>
            <a href="#" class="doc start"><Glyph class="logo" name="redLogo" />开始页面</a>
            <a href="#" class="doc current"><Glyph class="logo" name="redLogo" />Board_blue</a>
            <button class="arrow end" aria-label="Next tab"><Glyph name="right" /></button>
          </div>

          <section class="messages">
            <h2 class="panelhead">
              <span>Message Window</span>
              <button v-for="b in headButtons" :key="b" :aria-label="b"><Glyph :name="b" /></button>
            </h2>
            <div class="log"><b>Warning:</b> 批量 DRC 引擎发现 149 个风险。结果位于 "Drc.txt" 中。</div>
            <div class="logtabs">
              <button class="step" aria-label="Scroll left"><Glyph name="left" /></button>
              <button class="step" aria-label="Scroll right"><Glyph name="right" /></button>
              <Glyph class="slant" name="slantR" />
              <button class="bold">Output</button>
              <Glyph class="slant" name="slantL" />
              <button class="wide">Move Trace\Via</button>
              <Glyph class="slant" name="slantR" />
              <button>Place</button>
              <Glyph class="slant" name="slantL" />
            </div>
          </section>
        </section>

        <aside class="panel display">
          <h2 class="panelhead">
            <span>显示控制 - Board_blue</span>
            <button v-for="b in headButtons" :key="b" :aria-label="b"><Glyph :name="b" /></button>
          </h2>
          <div class="ptabs">
            <button>编辑</button><button class="sel">对象</button><button>图形</button><button>制造</button>
          </div>
          <div class="ptools">
            <button aria-label="Expand all"><Glyph name="plus" /></button>
            <button aria-label="Collapse all"><Glyph name="minus" /></button>
            <i class="fill"></i>
            <button aria-label="Move up"><Glyph name="armUp" /></button>
            <button aria-label="Move down"><Glyph name="armDown" /></button>
            <button aria-label="Clear"><Glyph name="erase" /></button>
            <button aria-label="Help"><Glyph name="book" /></button>
          </div>
          <div class="treebox">
            <div class="tree">
              <section v-for="sec in sections" :key="sec.title">
                <label class="sech"><Glyph class="twist" name="twist" /><input v-model="sec.on" type="checkbox" />{{ sec.title }}</label>
                <div v-for="row in sec.rows" :key="row.t" class="trow" :class="['lv' + row.lv, { line: row.line }]">
                  <span class="mark">
                    <i v-if="row.box" class="pm">{{ row.box }}</i>
                    <i v-else-if="row.sw" class="sw" :class="{ core: row.core }" :style="{ backgroundColor: row.sw }"></i>
                  </span>
                  <label><input v-model="row.on" type="checkbox" />{{ row.t }}</label>
                  <template v-if="row.on2 !== undefined">
                    <label class="second">{{ row.right }}<input v-model="row.on2" type="checkbox" :aria-label="row.t + ' 底面'" /></label>
                    <span class="mark"><i v-if="row.sw2" class="sw" :class="{ core: row.core }" :style="{ backgroundColor: row.sw2 }"></i></span>
                  </template>
                </div>
              </section>
            </div>
            <div class="scroll"><Glyph name="up" /><i class="thumb long"></i><i class="fill"></i><Glyph name="down" /></div>
          </div>
          <div class="schemebar">
            <span class="pick grey"><select aria-label="Scheme"><option>Loc: PLACE_my</option></select><Glyph name="down" /></span>
            <button aria-label="Browse">...</button>
            <button aria-label="Save"><Glyph name="disk" /></button>
            <button aria-label="Delete" class="del"><Glyph name="del" /></button>
          </div>
        </aside>

        <aside class="panel editor">
          <h2 class="panelhead">
            <span>Editor Control</span>
            <button v-for="b in headButtons" :key="b" :aria-label="b"><Glyph :name="b" /></button>
          </h2>
          <div class="ptabs"><button>Place</button><button>Route</button><button class="sel">Grids</button></div>
          <div class="ptools">
            <button aria-label="Expand all"><Glyph name="half" /></button>
            <button aria-label="Collapse all"><Glyph name="minus" /></button>
            <i class="fill"></i>
            <button aria-label="Move up"><Glyph name="armUp" /></button>
            <button aria-label="Move down"><Glyph name="armDown" /></button>
            <button aria-label="Help"><Glyph name="book" /></button>
          </div>
          <div class="gridbox">
            <div class="gridform">
              <h3 class="sech"><Glyph class="twist" name="twist" />元件栅格 (th)</h3>
              <div class="fields">
                <label v-for="f in gridFields" :key="f.label">{{ f.label }}<span class="pick"><select v-model="f.value"><option>{{ f.value }}</option></select><Glyph name="down" /></span></label>
              </div>
              <p>元件使用主要栅格的条件</p>
            </div>
            <div class="scroll"><Glyph name="up" /><i class="thumb"></i><i class="fill"></i><Glyph name="down" /></div>
          </div>
          <div class="general">
            <h3 class="sech"><Glyph class="twist" name="twist" />通用设置</h3>
            <label v-for="o in options" :key="o.label" class="opt" :class="{ nested: o.nested }"><input v-model="o.on" type="checkbox" />{{ o.label }}</label>
            <p class="opt">临时工作区自动保存间隔</p>
            <label v-for="s in saveEvery" :key="s.label" class="num"><span>{{ s.label }}</span><input v-model="s.value" type="text" />{{ s.unit }}</label>
          </div>
          <div class="schemebar">
            <span class="pick grey"><select aria-label="Scheme"><option>未选择方案</option></select><Glyph name="down" /></span>
            <button aria-label="Browse">...</button>
            <button aria-label="Save"><Glyph name="disk" /></button>
            <button aria-label="Delete" class="del"><Glyph name="del" /></button>
          </div>
        </aside>
      </main>

      <div class="fkeys">
        <button v-for="f in fkeys" :key="f[0]" :class="{ live: f[1] }">{{ f[0] }}</button>
        <div class="hint">左键</div>
      </div>

      <footer class="status">
        <span class="msg">Saving databases...</span>
        <span class="cellline"></span><span class="cellline"></span><span class="cellline"></span>
        <span class="layer"><b>1H.</b> <em>4V</em></span>
        <span class="gloss">Gloss On</span>
        <i class="led"></i><i class="led"></i><i class="led"></i>
      </footer>
    </div>

    <nav class="taskbar">
      <button aria-label="Start"><svg viewBox="0 0 12 12"><path fill="#eee" d="M0 2l5-1v5H0z M6 1l6-1v6H6z M0 7h5v4l-5-1z M6 7h6v5l-6-1z" /></svg></button>
      <button aria-label="Task view"><svg viewBox="0 0 12 12"><path fill="none" stroke="#ddd" d="M1 3h6v6H1z M0 1h3 M5 1h3 M0 11h3 M5 11h3 M10 1v2 M10 5v6" /></svg></button>
      <button class="win"><svg viewBox="0 0 12 12"><path fill="#f0cc5c" d="M2 1h4l1 1h2v10H2z" /><path fill="#fbe9a4" d="M4 3h6v8H4z" /></svg>D:\...</button>
      <button aria-label="Browser"><svg viewBox="0 0 12 12"><circle cx="6" cy="6" r="4.500" fill="#fff" stroke="#2a8fe8" stroke-width="2.500" /><path d="M7 8l4 3" stroke="#1c60c0" stroke-width="2" /></svg></button>
      <button class="win"><svg viewBox="0 0 12 12"><path fill="#ee8a2c" d="M0 0h12v12H0z" /><path d="M8 4H4v5h5V6H6 M8 3l2-1" stroke="#fff" fill="none" stroke-width="1.500" /></svg>M...</button>
      <button class="win"><svg viewBox="0 0 12 12"><path fill="#5cb83c" d="M0 0h12v12H0z" /><path d="M1 5h2 M3 3h5l2 2v2L8 9H4V6h4" stroke="#fff" fill="none" stroke-width="1.200" /></svg>Xp...</button>
      <button class="win front"><Glyph name="redLogo" />Xp...</button>
      <i class="fill"></i>
      <button class="chev" aria-label="Show hidden icons"><svg viewBox="0 0 12 12"><path fill="none" stroke="#ddd" d="M6 2L2 6l4 4" /></svg></button>
      <div class="tray">
        <svg viewBox="0 0 12 12"><path fill="none" stroke="#ddd" d="M3 2h8v6H3z M0 2h3 M1 4v5h2 M5 10h5" /></svg>
        <svg viewBox="0 0 12 12"><path fill="none" stroke="#ddd" d="M1 4h2l3-2v8L3 8H1z M8 4v4" /><path fill="none" stroke="#777" d="M10 3v6" /></svg>
      </div>
      <svg class="ime" viewBox="0 0 12 12"><path fill="#38a83c" d="M1 2l9-1 1 9-9 1z" /><path fill="none" stroke="#fff" stroke-width="1.500" d="M9 4H4v2h4v2H3" /></svg>
      <time><span>14:54</span><span>星期三</span><span>19.9.4</span></time>
    </nav>
  </div>
</template>

<style>
body {
  background: #f0f0f0;
}
</style>

<style scoped>
* {
  box-sizing: border-box;
}
.desktop {
  display: flex;
  min-height: 100vh;
  font: 8px/11px Roboto, 'Noto Sans CJK SC', sans-serif;
  color: #141418;
  text-rendering: geometricPrecision;
}
button, select, input {
  font: inherit;
  color: inherit;
  text-rendering: inherit;
  margin: 0;
  padding: 0;
  border: 0;
  background: none;
  border-radius: 0;
}
h2, h3, p {
  margin: 0;
  font: inherit;
}
svg {
  flex: none;
  display: block;
}
.fill {
  flex: 1;
}
.app {
  flex: 1;
  min-width: 0;
  display: flex;
  flex-direction: column;
  background: #eef1fb;
}
.logo {
  width: 11px;
  height: 11px;
}
.titlebar {
  display: flex;
  align-items: center;
  height: 16px;
  padding-left: 2px;
  gap: 2px;
  background: #fff;
  font-size: 9px;
}
.title {
  flex: 1;
  white-space: nowrap;
}
.winbtns {
  display: flex;
}
.winbtns button {
  width: 32px;
  height: 16px;
  display: grid;
  place-items: center;
}
.winbtns svg, .mdi svg, .panelhead svg {
  width: 9px;
  height: 9px;
}
.menubar {
  display: flex;
  align-items: center;
  height: 15px;
  padding-left: 2px;
  font-size: 9px;
}
.menubar button {
  padding: 0 4px 0 6px;
  white-space: nowrap;
}
.menubar small {
  font-size: 7px;
}
.coords {
  display: flex;
  align-items: center;
  justify-content: space-between;
  height: 17px;
  margin-left: 548px;
  padding: 0 2px 0 6px;
  border-left: 1px solid #c8ccd8;
}
.coords output {
  white-space: nowrap;
}
.mdi {
  display: flex;
  gap: 2px;
}
.toolbars {
  display: flex;
  flex-direction: column;
  gap: 1px;
}
.toolrow {
  display: flex;
  height: 17px;
}
.toolrow.floating {
  padding-left: 378px;
}
.toolgroup {
  display: flex;
  align-items: center;
  background: linear-gradient(#f4f5fb, #e3e5ef 50%, #c6c8d8);
  border-bottom: 1px solid #b4b7c6;
  border-radius: 0 4px 4px 0;
}
.toolgroup.grow {
  flex: 1;
}
.grip {
  flex: none;
  width: 3px;
  height: 11px;
  margin: 0 2px;
  background: radial-gradient(circle at 1px 1px, #a4a7b6 1px, transparent 1px) 0 0 / 3px 3px;
}
.tool {
  width: 15px;
  height: 16px;
  display: grid;
  place-items: center;
}
.tool svg {
  width: 12px;
  height: 12px;
  font-family: 'Liberation Sans', sans-serif;
  font-weight: bold;
}
.tool.on {
  background: #cfe4f8;
  box-shadow: inset 0 0 0 1px #5f9fd0;
}
.tool.deep {
  background: #a8b0c8;
  box-shadow: inset 0 0 0 1px #66708e;
}
.sep {
  flex: none;
  width: 1px;
  height: 11px;
  margin: 0 2px;
  background: #c5c8d5;
}
.drop {
  width: 7px;
  height: 16px;
  display: grid;
  place-items: center;
}
.drop::before, .over::before {
  content: '';
  border: 2px solid transparent;
  border-top-color: #222;
  border-bottom: 0;
}
.over {
  align-self: stretch;
  display: grid;
  place-items: end center;
  width: 8px;
  margin-left: auto;
  padding-bottom: 2px;
  background: linear-gradient(#dfe1ea, #b2b5c8);
  border-radius: 0 4px 4px 0;
}
.scheme {
  width: 135px;
  height: 13px;
  padding: 0 4px;
  appearance: none;
  background: #fff linear-gradient(#333, #333) 127px 6px / 3px 2px no-repeat;
}
.distance {
  flex: 1;
  margin-right: 2px;
  padding-left: 3px;
  background: #f0f0f2;
}
.space {
  width: 122px;
}
.padder {
  width: 7px;
}
.work {
  flex: 1;
  display: grid;
  grid-template-columns: minmax(0, 1fr) 146px 149px;
  column-gap: 3px;
  align-items: stretch;
}
.center {
  display: flex;
  flex-direction: column;
  min-width: 0;
}
.canvas {
  padding: 2px 4px 4px;
  background: #fff;
  border: solid #b8bccb;
  border-width: 1px 1px 1px 0;
}
.pcb {
  width: 100%;
  background: #000;
}
.doctabs {
  display: flex;
  align-items: center;
  height: 16px;
}
.arrow {
  width: 12px;
  display: grid;
  place-items: center;
}
.arrow svg, .step svg {
  width: 9px;
  height: 9px;
}
.arrow.end {
  margin: 0 4px 0 auto;
}
.doc {
  display: flex;
  align-items: center;
  gap: 3px;
  height: 14px;
  color: #141418;
  text-decoration: none;
  white-space: nowrap;
}
.doc.start {
  padding: 0 4px 0 16px;
  background: #b3cde0;
  clip-path: polygon(0 0, 100% 0, 100% 100%, 16px 100%);
  font-size: 9px;
}
.doc.current {
  padding: 0 3px 0 4px;
  background: #c8e6f5;
  font-weight: bold;
}
.messages {
  flex: 1;
  display: flex;
  flex-direction: column;
  background: #f0f0f0;
}
.panelhead {
  display: flex;
  align-items: center;
  gap: 3px;
  height: 13px;
  padding: 0 3px 0 2px;
  background: linear-gradient(#d8e2ec, #bccbda);
}
.panelhead span {
  flex: 1;
  white-space: nowrap;
}
.log {
  flex: 1;
  padding: 0 7px;
  background: #fff;
  border: 1px solid #777b86;
  border-right: 0;
  font-size: 7px;
  line-height: 9px;
}
.log b {
  color: #2a2ad8;
}
.logtabs {
  display: flex;
  align-items: center;
  height: 14px;
  padding-bottom: 3px;
  gap: 2px;
}
.logtabs button {
  white-space: nowrap;
}
.logtabs .step {
  width: 10px;
  height: 11px;
  display: grid;
  place-items: center;
  border: 1px solid #b8b8b8;
}
.logtabs .wide {
  padding: 0 5px 0 3px;
}
.slant {
  width: 11px;
  height: 11px;
  margin: 0 -3px;
}
.logtabs .bold {
  padding: 0 2px;
  font-weight: bold;
}
.panel {
  display: flex;
  flex-direction: column;
  background: #f0f0f0;
  margin-bottom: 2px;
}
.ptabs {
  display: flex;
  align-items: center;
  height: 16px;
  padding-left: 2px;
}
.ptabs button {
  height: 11px;
  padding: 0 4px;
  border-right: 1px solid #555;
}
.ptabs .sel {
  line-height: 9px;
}
.display .ptabs {
  padding-left: 0;
}
.display .ptabs button:first-child {
  border: 0;
}
.ptools {
  display: flex;
  align-items: center;
  gap: 4px;
  height: 13px;
  padding: 0 2px;
}
.ptools svg {
  width: 11px;
  height: 11px;
}
.treebox, .gridbox {
  display: flex;
  border-top: 1px solid #888;
  border-bottom: 1px solid #888;
}
.treebox {
  height: 229px;
  margin: 0 2px 0 0;
}
.tree {
  flex: 1;
  min-width: 0;
  overflow: hidden;
  padding: 1px 0 0 4px;
}
.sech {
  display: flex;
  align-items: center;
  gap: 3px;
  height: 14px;
  padding-left: 2px;
  background: linear-gradient(#f2f2f2, #c4c4c6);
  border-top: 1px solid #d8d8d8;
}
.twist {
  width: 9px;
  height: 9px;
}
.tree .sech {
  gap: 2px;
  padding-left: 1px;
}
.tree .sech .twist {
  margin-right: 1px;
}
input[type='checkbox'] {
  appearance: none;
  flex: none;
  width: 9px;
  height: 9px;
  border: 1px solid #444;
  background: #fff;
}
input[type='checkbox']:checked::before {
  content: '';
  display: block;
  width: 6px;
  height: 3px;
  margin: 1px 0 0 1px;
  border: solid #333;
  border-width: 0 0 1px 1px;
  transform: rotate(-45deg);
}
.trow {
  display: flex;
  align-items: center;
  height: 11px;
  gap: 3px;
}
.trow.lv1 {
  padding-left: 12px;
}
.trow.lv2 {
  padding-left: 24px;
}
.trow.line {
  height: 15px;
  margin-bottom: 1px;
  border-bottom: 1px solid #aaa;
}
.trow label {
  display: flex;
  align-items: center;
  gap: 3px;
  white-space: nowrap;
}
.trow .second {
  margin-left: auto;
}
.mark {
  flex: none;
  width: 9px;
}
.sech + .trow {
  margin-top: 1px;
}
.mark i {
  display: block;
  width: 8px;
  height: 8px;
}
.mark .sw {
  border: 1px solid #555;
}
.sw.core {
  background-image: linear-gradient(#000, #000);
  background-size: 4px 4px;
  background-position: center;
  background-repeat: no-repeat;
}
.pm {
  border: 1px solid #8ba0c8;
  background: #e2ebfa;
  color: #20408c;
  font: bold 8px/6px Roboto, sans-serif;
  text-align: center;
}
.scroll {
  display: flex;
  flex-direction: column;
  align-items: center;
  flex: none;
  width: 10px;
  padding: 2px 0;
  background: #f3f3f3;
}
.scroll svg {
  width: 9px;
  height: 9px;
}
.thumb {
  width: 10px;
  height: 18px;
  background: #cdcdcd;
}
.thumb.long {
  height: 52px;
}
.schemebar {
  display: flex;
  align-items: center;
  gap: 3px;
  height: 15px;
  margin: auto 0 6px 4px;
}
.schemebar .pick {
  flex: 1;
}
.schemebar button {
  width: 13px;
  height: 15px;
  display: grid;
  place-items: center;
  border: solid #777;
  border-width: 0 1px 1px 0;
  font-weight: bold;
  font-size: 11px;
}
.schemebar .del {
  width: 11px;
  border: 0;
}
.schemebar button svg {
  width: 11px;
  height: 11px;
}
.pick {
  display: flex;
  align-items: center;
  height: 14px;
  padding-right: 2px;
  background: #fff;
  border: 1px solid #8a8a8a;
}
.pick select {
  appearance: none;
  flex: 1;
  min-width: 0;
  padding: 0 2px;
}
.pick svg {
  width: 8px;
  height: 8px;
}
.pick.grey {
  background: #e2e2e2;
  border-color: #b0b0b0;
}
.gridbox {
  height: 97px;
}
.gridform {
  flex: 1;
  padding: 1px 0 0 2px;
}
.fields {
  display: grid;
  grid-template-columns: 41px 41px;
  column-gap: 27px;
  row-gap: 2px;
  padding: 6px 0 0 2px;
}
.fields label {
  display: block;
  line-height: 12px;
}
.gridform p {
  padding: 5px 0 0 2px;
}
.general {
  padding: 3px 0 0 2px;
}
.opt {
  display: flex;
  align-items: center;
  gap: 2px;
  height: 15px;
  padding-left: 2px;
}
.sech + .opt {
  margin-top: 6px;
}
.opt.nested {
  padding-left: 14px;
}
.num {
  display: flex;
  align-items: center;
  gap: 4px;
  height: 24px;
}
.num span {
  width: 57px;
  padding-left: 19px;
  white-space: nowrap;
}
.num input {
  width: 41px;
  height: 16px;
  padding: 0 3px;
  background: #fff;
  border: 1px solid #8a8a8a;
}
.fkeys {
  position: relative;
  display: flex;
  gap: 1px;
  height: 18px;
  background: #e6e6e6;
}
.fkeys button {
  flex: 1 1 0;
  height: 17px;
  border: 1px solid #a6a6a6;
  background: #f0f0f0;
  color: #8a8a8a;
  font: 8px/15px 'Liberation Mono', 'Noto Sans CJK SC', monospace;
  white-space: nowrap;
}
.fkeys .live {
  color: #111;
  border-color: #777;
}
.hint {
  position: absolute;
  left: 121px;
  bottom: 1px;
  width: 53px;
  height: 27px;
  background: #5a5a5ae0;
  color: #dedede;
  font: 300 21px/25px 'Noto Sans CJK SC', sans-serif;
  text-align: center;
}
.status {
  display: flex;
  align-items: center;
  height: 14px;
  padding: 0 2px 0 4px;
  background: #f0f0f0;
}
.msg {
  width: 174px;
}
.cellline {
  width: 166px;
  height: 12px;
  border-left: 1px solid #e0e0e0;
}
.layer {
  width: 37px;
  height: 9px;
  margin-left: auto;
  padding-left: 1px;
  background: #000;
  font: bold 8px/9px Roboto, sans-serif;
}
.layer b {
  color: #d03028;
}
.layer em {
  color: #2cc4dc;
  font-style: normal;
}
.gloss {
  width: 48px;
  padding-left: 5px;
}
.led {
  width: 7px;
  height: 7px;
  margin-right: 1px;
  border-radius: 50%;
  background: #24c82c;
  border: 1px solid #108a18;
}
.taskbar {
  flex: none;
  width: 42px;
  display: flex;
  flex-direction: column;
  background: #141414;
  color: #f0f0f0;
  border-bottom: 1px solid #666;
}
.taskbar svg {
  width: 11px;
  height: 11px;
}
.taskbar button {
  display: flex;
  align-items: center;
  justify-content: center;
  height: 21px;
  font-size: 9px;
}
.taskbar .win {
  justify-content: flex-start;
  gap: 3px;
  padding-left: 5px;
  border-right: 2px solid #6aa8dc;
  margin-bottom: 1px;
}
.taskbar .front {
  background: #3a3a3c;
}
.taskbar .chev {
  height: 14px;
  justify-content: flex-start;
  padding-left: 6px;
}
.tray {
  display: flex;
  gap: 4px;
  padding: 3px 0 6px 7px;
}
.ime {
  align-self: center;
}
time {
  display: flex;
  flex-direction: column;
  padding: 13px 0 8px;
  text-align: center;
  font-size: 9px;
  line-height: 12px;
}
</style>
